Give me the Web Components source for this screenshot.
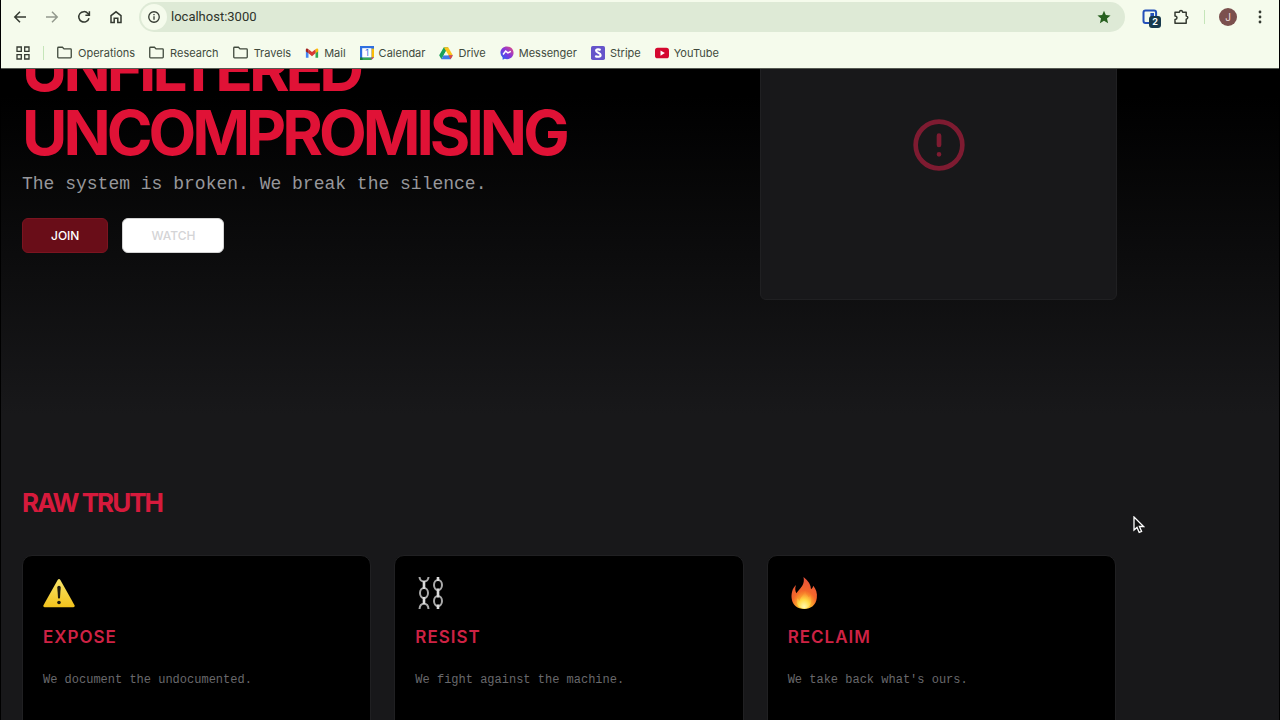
<!DOCTYPE html>
<html lang="en">
<head>
    <meta charset="UTF-8">
    <meta name="viewport" content="width=device-width, initial-scale=1.0">
    <title>Raw Truth</title>
    <style>
        body {
            margin: 0;
            height: 100vh;
            box-sizing: border-box;
            display: flex;
            flex-direction: column;
            overflow: hidden;
            background-color: #000;
            border: solid #000;
            border-width: 0 1px;
            font-family: Inter, "Liberation Sans", sans-serif;
        }
    </style>
</head>
<body>
    <browser-bar></browser-bar>
    <page-view>
        <hero-section>
            <span slot="title">UNFILTERED<br>UNCOMPROMISING</span>
            <span slot="subtitle">The system is broken. We break the silence.</span>
            <action-button slot="actions">JOIN</action-button>
            <action-button slot="actions" variant="outline">WATCH</action-button>
        </hero-section>
        <truth-section>
            <span slot="title">RAW TRUTH</span>
            <truth-card icon="warning">
                <span slot="title">EXPOSE</span>
                We document the undocumented.
            </truth-card>
            <truth-card icon="chains">
                <span slot="title">RESIST</span>
                We fight against the machine.
            </truth-card>
            <truth-card icon="fire">
                <span slot="title">RECLAIM</span>
                We take back what's ours.
            </truth-card>
        </truth-section>
    </page-view>
    <mouse-pointer></mouse-pointer>

    <script>
        const line = (body, width = 1.5) =>
            `<svg viewBox="0 0 16 16" fill="none" stroke="currentColor" stroke-width="${width}">${body}</svg>`;

        const link = (y) => `<ellipse cy="${y}" rx="4" ry="5" />`;

        const icons = {
            back: line('<path d="M14 8H3M8 2.8 2.8 8 8 13.2" />'),
            forward: line('<path d="M2 8h11M8 2.8 13.2 8 8 13.2" />'),
            reload: line('<path d="M13 9.2A5.2 5.2 0 1 1 11.9 4.4L13.2 6M13.4 2.2V6.2H9.4" />'),
            home: line('<path d="M3 6.7 8 2.8l5 3.9v6.8H9.8V9.3H6.2v4.2H3z" />'),
            info: line('<circle cx="8" cy="8" r="6" /><path d="M8 7.2v4M8 4.6v1.4" />'),
            star: '<svg viewBox="0 0 16 16" fill="#27601f"><path d="m8 .8 2.1 4.9 5.4.5-4.1 3.5 1.3 5.3L8 12.2 3.3 15l1.3-5.3L.5 6.2l5.4-.5z" /></svg>',
            puzzle: line('<path d="M2 3.2h4.4q.2-1.6 1.6-1.6t1.6 1.6h3.6V7q1.6.2 1.6 1.6t-1.6 1.6v4H2v-3.6q2-.3 2-1.8T2 7z" stroke-linejoin="round" />'),
            menu: '<svg viewBox="0 0 16 16" fill="currentColor"><circle cx="8" cy="3" r="1.4" /><circle cx="8" cy="8" r="1.4" /><circle cx="8" cy="13" r="1.4" /></svg>',
            shield: '<svg viewBox="0 0 16 16"><rect x="1.5" y="1.5" width="12.6" height="12.6" rx="2" fill="#f5fbec" stroke="#2450b8" stroke-width="2" /><path d="M8.4 4h3.6v4.4H8.4z" fill="#2450b8" /></svg>',
            apps: line('<path d="M2 2h4.3v4.3H2zM9.7 2H14v4.3H9.7zM2 9.7h4.3V14H2zM9.7 9.7H14V14H9.7z" />', 1.3),
            folder: line('<path d="M.8 3.2q0-.8.8-.8h4.2l1.7 1.8h6.9q.8 0 .8.8v7.9q0 .8-.8.8H1.6q-.8 0-.8-.8z" />', 1.4),
            mail: '<svg viewBox="0 0 16 16"><path d="M1 4v9.3h3V6z" fill="#4285f4" /><path d="M15 4v9.3h-3V6z" fill="#34a853" /><path d="M12 3.6 13 3c1-.6 2 0 2 1.2v2L12 8.4z" fill="#fbbc04" /><path d="M4 3.6 8 6.8l4-3.2v4.8l-4 3.2-4-3.2z" fill="#d93a35" /><path d="M1 4.2C1 3 2 2.4 3 3l1 .6v4.8L1 6.2z" fill="#a3221f" /></svg>',
            calendar: '<svg viewBox="0 0 16 16"><path d="M0 0h16v16H0z" fill="#2f6fe0" /><path d="M13 3h3v10h-3z" fill="#fbbc04" /><path d="M3 13h10v3H3z" fill="#34a853" /><path d="M13 13h3l-3 3z" fill="#ea4335" /><path d="M16 13v3h-3z" fill="#f5fbec" /><path d="M0 13h3v3H0z" fill="#188038" /><path d="M2.5 2.5H13V13H2.5z" fill="#fff" /><text x="8" y="11.5" text-anchor="middle" font-size="10" fill="#2f6fe0">1</text></svg>',
            drive: '<svg viewBox="0 0 16 16"><path d="M5.5 1.5h5L5 11 2.7 15 .2 10.6z" fill="#19a15b" /><path d="M5.5 1.5h5l5.3 9.2h-5z" fill="#fcc31e" /><path d="M5.3 10.7h10.5L13.3 15H2.7z" fill="#3f79ea" /><path d="M10.8 10.7h5L13.3 15z" fill="#e4473a" /><path d="M8 6 5.3 10.7h5.5z" fill="#f5fbec" /></svg>',
            messenger: '<svg viewBox="0 0 16 16"><defs><linearGradient id="m" x1="0" y1="1" x2="1" y2="0"><stop stop-color="#1769f5" /><stop offset=".5" stop-color="#8336dc" /><stop offset="1" stop-color="#ed4e78" /></linearGradient></defs><path d="M8 .5c4.3 0 7.5 3 7.5 7.2S12.3 15 8 15c-.9 0-1.7-.1-2.5-.4L3 15.6v-2.4A7.2 7.2 0 0 1 .5 7.7C.5 3.5 3.7.5 8 .5z" fill="url(#m)" /><path d="m3.5 9.8 3-3.9 2.5 2 3.4-1.8" fill="none" stroke="#fff" stroke-width="1.7" /></svg>',
            stripe: '<svg viewBox="0 0 16 16"><rect width="16" height="16" rx="2" fill="#6554ca" /><path d="M11 4.5C9.6 3.8 5.8 3.2 5.8 5.5S11 7.7 11 10.2c0 2.6-4 2.4-6.2 1.2" fill="none" stroke="#fff" stroke-width="2.4" /></svg>',
            youtube: '<svg viewBox="0 0 16 16"><rect y="2" width="16" height="12" rx="3" fill="#d4082f" /><path d="m6.3 5 5 3-5 3z" fill="#fff" /></svg>',
            alert: '<svg viewBox="0 0 24 24" fill="none" stroke="currentColor" stroke-width="2" stroke-linecap="round"><circle cx="12" cy="12" r="10" /><path d="M12 8v4M12 16h.01" /></svg>',
            warning: '<svg viewBox="0 0 32 32"><defs><linearGradient id="w" x2="0" y2="1"><stop stop-color="#f8e56a" /><stop offset="1" stop-color="#f2c21c" /></linearGradient></defs><path d="M14.6 2.9q1.4-2 2.8 0l14 25q1 2-1 2.3H1.6q-2-.3-1-2.3z" fill="url(#w)" /><path d="M14.3 10.4q0-1.6 1.7-1.6t1.7 1.6L17 21q-1 1.2-2 0z" fill="#1d1a10" /><circle cx="16" cy="25.5" r="1.8" fill="#1d1a10" /></svg>',
            chains: `<svg viewBox="0 0 32 32" fill="none" stroke="#a9a9a9" stroke-width="2">
                <g transform="translate(9)"><path d="M-4.5 0C-4 6 4 6 4.5 0M-4.5 32C-4 25 4 25 4.5 32" />${link(16)}<path d="M0 4v8M0 20v7" stroke="#dcdcdc" stroke-width="2.6" /></g>
                <g transform="translate(23)">${link(8)}${link(24)}<path d="M0 0v4M0 11.5v9M0 27.5V32" stroke="#dcdcdc" stroke-width="2.6" /></g></svg>`,
            fire: `<svg viewBox="0 0 32 32"><defs>
                <radialGradient id="f" cx=".5" cy=".92" r=".9"><stop stop-color="#fff36b" /><stop offset=".25" stop-color="#ffb82e" /><stop offset=".55" stop-color="#f3672a" /><stop offset="1" stop-color="#e8513d" /></radialGradient>
                <radialGradient id="g" cx=".5" cy=".9" r=".8"><stop stop-color="#fffbb0" /><stop offset=".5" stop-color="#ffdc45" /><stop offset="1" stop-color="#f9802c" /></radialGradient></defs>
                <path d="M15.5 0c5 4 7.6 8 7.5 12.3 1.2-.9 2-2 2.3-3.5C28 12 29.5 16.5 28.8 21 28 28 22.8 32 16.4 32 9.5 32 4.5 28.3 3.7 21.5 3.2 17 4 11.5 8 8c-1.3 3.3-.8 6.2.4 8.3.8-1.5 3.6-4 5.7-7.3 1.7-2.7 2.2-5.6 1.4-9z" fill="url(#f)" />
                <path d="M17 14c.5 3 2.5 4 3.6 6.3 1-.6 1.5-1.6 1.8-2.8 2.4 6.5.1 14-6 14-6.5 0-8.6-5.5-7.2-10.5 1.1 1 1.8 1.9 2.3 3 .6-4 4.5-5.5 5.5-10z" fill="url(#g)" /></svg>`
        };

        class AppIcon extends HTMLElement {
            constructor() {
                super();
                this.attachShadow({ mode: 'open' });
            }

            connectedCallback() {
                this.shadowRoot.innerHTML = `
                    <style>
                        :host {
                            display: block;
                            flex: none;
                            width: var(--icon-size, 16px);
                            height: var(--icon-size, 16px);
                        }

                        svg {
                            display: block;
                            width: 100%;
                            height: 100%;
                        }
                    </style>
                    ${icons[this.getAttribute('name')]}
                `;
            }
        }

        class ToolButton extends HTMLElement {
            constructor() {
                super();
                this.attachShadow({ mode: 'open' });
            }

            connectedCallback() {
                this.shadowRoot.innerHTML = `
                    <style>
                        :host {
                            display: block;
                            flex: none;
                        }

                        button {
                            display: flex;
                            align-items: center;
                            justify-content: center;
                            position: relative;
                            width: 24px;
                            height: 24px;
                            padding: 0;
                            border: none;
                            background: none;
                            color: inherit;
                        }
                    </style>
                    <button type="button" aria-label="${this.getAttribute('label')}">
                        <app-icon name="${this.getAttribute('icon')}"></app-icon>
                        <slot></slot>
                    </button>
                `;
            }
        }

        class BookmarkLink extends HTMLElement {
            constructor() {
                super();
                this.attachShadow({ mode: 'open' });
            }

            connectedCallback() {
                this.shadowRoot.innerHTML = `
                    <style>
                        :host {
                            display: block;
                            flex: none;
                        }

                        a {
                            --icon-size: 14px;
                            display: flex;
                            align-items: center;
                            gap: 5px;
                            font-size: 11px;
                            line-height: 16px;
                            color: #414a3d;
                            text-decoration: none;
                        }

                        :host([icon="folder"]) a {
                            --icon-size: 15px;
                            gap: 6px;
                        }
                    </style>
                    <a href="#">
                        <app-icon name="${this.getAttribute('icon')}"></app-icon>
                        <slot></slot>
                    </a>
                `;
            }
        }

        class BrowserBar extends HTMLElement {
            constructor() {
                super();
                this.attachShadow({ mode: 'open' });
                this.shadowRoot.innerHTML = `
                    <style>
                        :host {
                            display: block;
                            flex: none;
                            position: relative;
                            background-color: #f5fbec;
                            border-bottom: 1px solid #555a52;
                            color: #343a31;
                        }

                        .toolbar {
                            display: flex;
                            align-items: center;
                            height: 34px;
                            padding: 0 7px;
                        }

                        .nav {
                            display: flex;
                            gap: 8px;
                        }

                        .disabled {
                            color: #92998d;
                        }

                        .address {
                            --icon-size: 14px;
                            display: flex;
                            align-items: center;
                            flex: 1;
                            height: 30px;
                            margin: 0 13px 0 11px;
                            padding: 0 14px 0 2px;
                            border-radius: 15px;
                            background-color: #deead6;
                        }

                        .site-info {
                            display: flex;
                            align-items: center;
                            justify-content: center;
                            width: 26px;
                            height: 26px;
                            border-radius: 50%;
                            background-color: #f5fbec;
                        }

                        input {
                            flex: 1;
                            min-width: 0;
                            margin-left: 4px;
                            padding: 0;
                            border: none;
                            outline: none;
                            background: none;
                            font: 13px/16px Roboto, "Liberation Sans", sans-serif;
                            color: #2d332a;
                        }

                        .tools {
                            display: flex;
                            align-items: center;
                            gap: 7px;
                        }

                        .badge {
                            position: absolute;
                            left: 11px;
                            top: 11px;
                            width: 12px;
                            height: 12px;
                            border-radius: 3px;
                            background-color: #17394d;
                            font: bold 9px/12px Inter, sans-serif;
                            color: #fff;
                            text-align: center;
                        }

                        .divider {
                            flex: none;
                            width: 1px;
                            height: 14px;
                            margin: 0 3px 0 4px;
                            background-color: #c5e5b9;
                        }

                        .avatar {
                            width: 18px;
                            height: 18px;
                            margin: 0 4px;
                            padding: 0;
                            border: none;
                            border-radius: 50%;
                            background-color: #7b504e;
                            font: 10px/18px Inter, sans-serif;
                            color: #eed9d6;
                        }

                        .bookmarks {
                            display: flex;
                            align-items: center;
                            gap: 14px;
                            height: 31px;
                            padding: 3px 10px 0;
                        }

                        .bookmarks .divider {
                            margin: 0 -1px 0 -6px;
                        }
                    </style>
                    <div class="toolbar">
                        <div class="nav">
                            <tool-button icon="back" label="Back"></tool-button>
                            <tool-button class="disabled" icon="forward" label="Forward"></tool-button>
                            <tool-button icon="reload" label="Reload"></tool-button>
                            <tool-button icon="home" label="Home"></tool-button>
                        </div>
                        <div class="address">
                            <span class="site-info"><app-icon name="info"></app-icon></span>
                            <input type="text" value="localhost:3000" aria-label="Address">
                            <app-icon name="star"></app-icon>
                        </div>
                        <div class="tools">
                            <tool-button icon="shield" label="Password manager"><span class="badge">2</span></tool-button>
                            <tool-button icon="puzzle" label="Extensions"></tool-button>
                            <span class="divider"></span>
                            <button class="avatar" type="button">J</button>
                            <tool-button icon="menu" label="Menu"></tool-button>
                        </div>
                    </div>
                    <nav class="bookmarks">
                        <tool-button icon="apps" label="All bookmarks"></tool-button>
                        <span class="divider"></span>
                        <bookmark-link icon="folder">Operations</bookmark-link>
                        <bookmark-link icon="folder">Research</bookmark-link>
                        <bookmark-link icon="folder">Travels</bookmark-link>
                        <bookmark-link icon="mail">Mail</bookmark-link>
                        <bookmark-link icon="calendar">Calendar</bookmark-link>
                        <bookmark-link icon="drive">Drive</bookmark-link>
                        <bookmark-link icon="messenger">Messenger</bookmark-link>
                        <bookmark-link icon="stripe">Stripe</bookmark-link>
                        <bookmark-link icon="youtube">YouTube</bookmark-link>
                    </nav>
                `;
            }
        }

        class PageView extends HTMLElement {
            constructor() {
                super();
                this.attachShadow({ mode: 'open' });
                this.shadowRoot.innerHTML = `
                    <style>
                        :host {
                            display: block;
                            flex: 1;
                            min-height: 0;
                            overflow: hidden;
                            background-color: #18181a;
                        }

                        /* page is scrolled part of the way through the hero */
                        main {
                            margin-top: -79px;
                        }
                    </style>
                    <main><slot></slot></main>
                `;
            }
        }

        class ActionButton extends HTMLElement {
            constructor() {
                super();
                this.attachShadow({ mode: 'open' });
                this.shadowRoot.innerHTML = `
                    <style>
                        :host {
                            display: block;
                        }

                        button {
                            height: 35px;
                            padding: 0 28px;
                            border: 1px solid #7b1420;
                            border-radius: 6px;
                            background-color: #690d18;
                            font: 500 12px/16px Inter, "Liberation Sans", sans-serif;
                            color: #fff;
                            cursor: pointer;
                        }

                        :host([variant="outline"]) button {
                            border-color: #d4d4d4;
                            background-color: #fff;
                            color: #d4d4d6;
                        }
                    </style>
                    <button type="button"><slot></slot></button>
                `;
            }
        }

        class HeroSection extends HTMLElement {
            constructor() {
                super();
                this.attachShadow({ mode: 'open' });
                this.shadowRoot.innerHTML = `
                    <style>
                        :host {
                            display: block;
                            padding: 0 21px 114px;
                            background: linear-gradient(#000 25%, #18181a);
                        }

                        .inner {
                            display: grid;
                            grid-template-columns: 1fr 357px;
                            align-items: center;
                            max-width: 1095px;
                        }

                        h1 {
                            margin: 0 0 5px;
                            font-size: 62px;
                            font-weight: 700;
                            line-height: 64px;
                            letter-spacing: -4px;
                            color: #e01236;
                        }

                        p {
                            margin: 0 0 20px;
                            font: 18px/28px "Liberation Mono", monospace;
                            color: #97979b;
                        }

                        .actions {
                            display: flex;
                            gap: 14px;
                        }

                        .media {
                            --icon-size: 56px;
                            display: flex;
                            align-items: center;
                            justify-content: center;
                            box-sizing: border-box;
                            height: 310px;
                            border: 1px solid #202022;
                            border-radius: 6px;
                            background-color: #18181a;
                            color: #7e1b31;
                        }
                    </style>
                    <div class="inner">
                        <div>
                            <h1><slot name="title"></slot></h1>
                            <p><slot name="subtitle"></slot></p>
                            <div class="actions"><slot name="actions"></slot></div>
                        </div>
                        <div class="media"><app-icon name="alert"></app-icon></div>
                    </div>
                `;
            }
        }

        class TruthSection extends HTMLElement {
            constructor() {
                super();
                this.attachShadow({ mode: 'open' });
                this.shadowRoot.innerHTML = `
                    <style>
                        :host {
                            display: block;
                            padding: 72px 21px;
                        }

                        h2 {
                            margin: 0 0 35px;
                            font-size: 26px;
                            font-weight: 700;
                            line-height: 34px;
                            letter-spacing: -2px;
                            color: #d61a3c;
                        }

                        .cards {
                            display: grid;
                            grid-template-columns: repeat(3, 1fr);
                            gap: 23px;
                            max-width: 1094px;
                        }
                    </style>
                    <h2><slot name="title"></slot></h2>
                    <div class="cards"><slot></slot></div>
                `;
            }
        }

        class TruthCard extends HTMLElement {
            constructor() {
                super();
                this.attachShadow({ mode: 'open' });
            }

            connectedCallback() {
                this.shadowRoot.innerHTML = `
                    <style>
                        :host {
                            --icon-size: 32px;
                            display: block;
                            padding: 21px 20px 44px;
                            border: 1px solid #202022;
                            border-radius: 10px;
                            background-color: #000;
                        }

                        h3 {
                            margin: 16px 0 21px;
                            font-size: 17px;
                            font-weight: 600;
                            line-height: 24px;
                            letter-spacing: 1px;
                            color: #ce2244;
                        }

                        p {
                            margin: 0;
                            font: 12px/20px "Liberation Mono", monospace;
                            color: #69696c;
                        }
                    </style>
                    <app-icon name="${this.getAttribute('icon')}"></app-icon>
                    <h3><slot name="title"></slot></h3>
                    <p><slot></slot></p>
                `;
            }
        }

        class MousePointer extends HTMLElement {
            constructor() {
                super();
                this.attachShadow({ mode: 'open' });
                this.shadowRoot.innerHTML = `
                    <style>
                        :host {
                            position: absolute;
                            left: 1133px;
                            top: 516px;
                            pointer-events: none;
                        }

                        svg {
                            display: block;
                        }
                    </style>
                    <svg width="12" height="18" viewBox="0 0 12 18">
                        <path d="M1 1v13l3-2.6 2.2 5 2.4-1-2.2-4.9h4.2z" fill="#111" stroke="#fff" stroke-width="1.3" />
                    </svg>
                `;
            }
        }

        customElements.define('app-icon', AppIcon);
        customElements.define('tool-button', ToolButton);
        customElements.define('bookmark-link', BookmarkLink);
        customElements.define('browser-bar', BrowserBar);
        customElements.define('page-view', PageView);
        customElements.define('action-button', ActionButton);
        customElements.define('hero-section', HeroSection);
        customElements.define('truth-section', TruthSection);
        customElements.define('truth-card', TruthCard);
        customElements.define('mouse-pointer', MousePointer);
    </script>
</body>
</html>
